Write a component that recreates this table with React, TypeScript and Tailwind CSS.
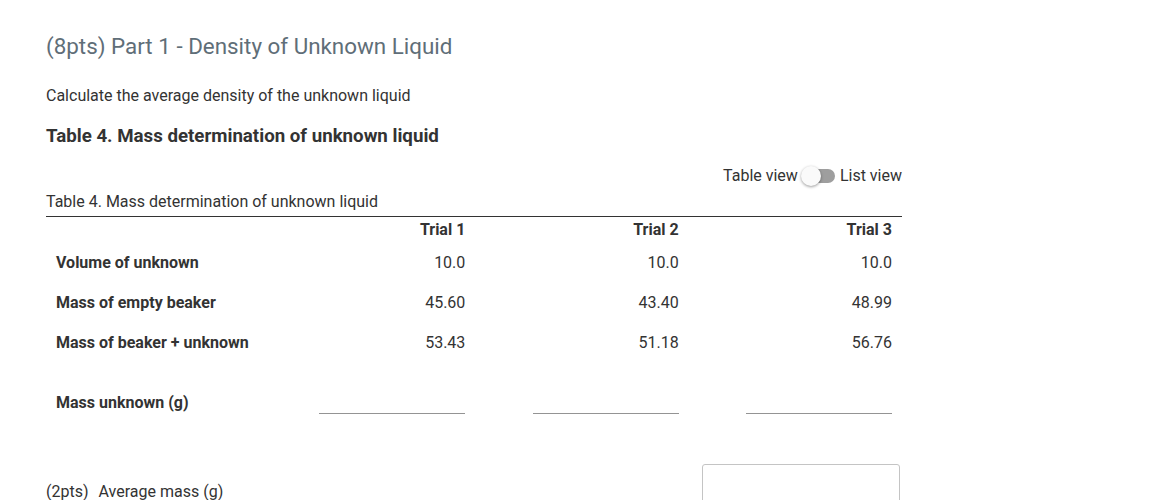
import React, { useState } from 'react';

const rows = [
  { label: 'Volume of unknown', values: ['10.0', '10.0', '10.0'] },
  { label: 'Mass of empty beaker', values: ['45.60', '43.40', '48.99'] },
  { label: 'Mass of beaker + unknown', values: ['53.43', '51.18', '56.76'] },
];

const App: React.FC = () => {
  const [listView, setListView] = useState(false);
  const [masses, setMasses] = useState(['', '', '']);
  const [avg, setAvg] = useState('');

  return (
    <div className="min-h-screen bg-white text-[#333] font-['Roboto',sans-serif] text-[16px]">
      <div className="w-[856px] ml-[46px] pt-[32px]">
        <h2 className="text-[22.4px] leading-[28px] text-[#5f6e78]">(8pts) Part 1 - Density of Unknown Liquid</h2>
        <p className="mt-[26px] leading-[20px]">Calculate the average density of the unknown liquid</p>
        <h3 className="mt-[18px] text-[18.7px] leading-[24px] font-bold">Table 4. Mass determination of unknown liquid</h3>

        <div className="mt-[18px] flex justify-end items-center leading-[20px]">
          <span>Table view</span>
          <button
            onClick={() => setListView(!listView)}
            className="relative ml-[2px] mr-[4px] w-[36px] h-[20px] flex items-center"
          >
            <span className="absolute left-[8px] right-[1px] h-[14px] rounded-full bg-[#9e9e9e]" />
            <span className="absolute left-[1px] w-[20px] h-[20px] rounded-full bg-[#fafafa] shadow-[0_1px_3px_rgba(0,0,0,0.4)]" />
          </button>
          <span>List view</span>
        </div>

        <table className="w-full table-fixed mt-[6px]">
          <caption className="text-left leading-[20px] pb-[4px] border-b border-[#333]">
            Table 4. Mass determination of unknown liquid
          </caption>
          <thead>
            <tr className="h-[26px]">
              <th className="w-[216px]" />
              <th className="text-right font-bold pr-[10px]">Trial 1</th>
              <th className="text-right font-bold pr-[10px]">Trial 2</th>
              <th className="text-right font-bold pr-[10px]">Trial 3</th>
            </tr>
          </thead>
          <tbody>
            {rows.map((r, i) => (
              <tr key={i} className="h-[40px]">
                <td className="pl-[10px] font-bold">{r.label}</td>
                {r.values.map((v, j) => (
                  <td key={j} className="text-right pr-[10px]">{v}</td>
                ))}
              </tr>
            ))}
            <tr className="h-[80px]">
              <td className="pl-[10px] font-bold">Mass unknown (g)</td>
              {masses.map((m, j) => (
                <td key={j} className="pr-[10px]">
                  <div className="flex justify-end pt-[2px]">
                    <input
                      value={m}
                      onChange={(e) => {
                        const next = [...masses];
                        next[j] = e.target.value;
                        setMasses(next);
                      }}
                      className="w-[146px] h-[20px] border-b border-[#949494] outline-none text-right"
                    />
                  </div>
                </td>
              ))}
            </tr>
          </tbody>
        </table>

        <div className="mt-[21px] flex items-start">
          <div className="w-[656px] pt-[18px] leading-[20px]">
            <span>(2pts)</span>
            <span className="ml-[10px]">Average mass (g)</span>
          </div>
          <input
            value={avg}
            onChange={(e) => setAvg(e.target.value)}
            className="w-[198px] h-[44px] border border-[#c4c4c4] rounded-[3px] outline-none px-2"
          />
        </div>
      </div>
    </div>
  );
};

export default App;
